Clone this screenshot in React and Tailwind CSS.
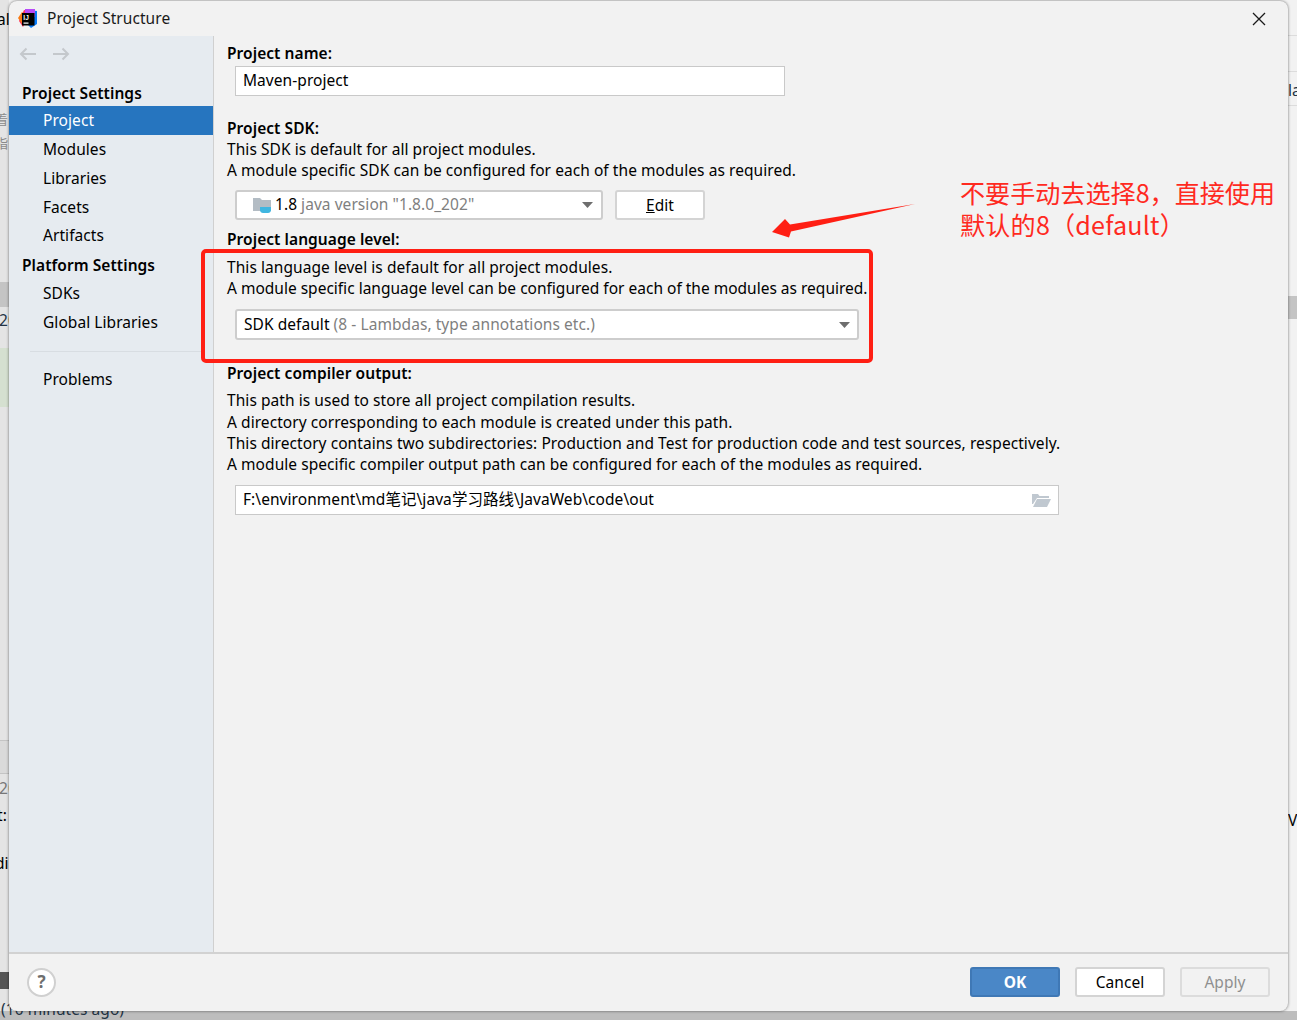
import React from "react";

function Arrowhead() {
  return (
    <svg width="11" height="6" viewBox="0 0 11 6"><path d="M0 0h11L5.500 6z" fill="#6e6e6e" /></svg>
  );
}

function Logo() {
  return (
    <svg width="20" height="20" viewBox="0 0 20 20">
      <path d="M1 12L6 1l7 1-8 16z" fill="#fe315d" />
      <path d="M0 9l4-6 5 5-4 8z" fill="#f97a12" />
      <path d="M9 1l10 1 0 13-6 4-4-4z" fill="#087cfa" />
      <path d="M7 0h10v8H7z" fill="#b74af7" />
      <rect x="4" y="4" width="12.5" height="12.5" fill="#000" />
      <rect x="5.5" y="13.5" width="5" height="1.2" fill="#fff" />
      <text x="5.3" y="11" fontSize="6.5" fontWeight="700" fill="#fff" fontFamily="Liberation Sans, sans-serif">IJ</text>
    </svg>
  );
}

function NavItem({ children, active, className = "" }) {
  return (
    <div className={`h-[29px] pl-[34px] flex items-center ${active ? "bg-[#2675bf] text-white" : "text-black"} ${className}`}>{children}</div>
  );
}

function NavHead({ children, className = "" }) {
  return <div className={`pl-[13px] flex items-center font-semibold text-black ${className}`}>{children}</div>;
}

function Line({ children, bold, className = "" }) {
  return <div className={`h-[21px] leading-[21px] whitespace-nowrap ${bold ? "font-semibold" : ""} ${className}`}>{children}</div>;
}

function Btn({ children, className = "" }) {
  return <div className={`h-[30px] rounded-[3px] border-2 pt-px flex items-center justify-center ${className}`}>{children}</div>;
}

export default function App() {
  return (
    <div className="relative w-[1297px] h-[1020px] overflow-hidden bg-[#f2f2f2] text-[15.5px] tracking-[0.06px] text-black" style={{ fontFamily: '"Noto Sans", "Noto Sans CJK SC", sans-serif' }}>
      {/* window behind the dialog */}
      <div className="absolute left-0 top-0 w-[9px] h-full bg-[#e4e4e4]" />
      <div className="absolute left-0 top-[282px] w-[9px] h-[25px] bg-[#c4c4c4]" />
      <div className="absolute left-0 top-[348px] w-[9px] h-[59px] bg-[#d5e0d0]" />
      <div className="absolute left-0 top-[740px] w-[9px] h-[34px] bg-[#dadada] border-y border-[#c4c4c4]" />
      <div className="absolute left-[-3px] top-[8px]">al</div>
      <div className="absolute left-[-5px] top-[110px] text-[#8a8a8a] text-[13px]">着</div>
      <div className="absolute left-[-5px] top-[134px] text-[#8a8a8a] text-[13px]">指</div>
      <div className="absolute left-[-1px] top-[309px] text-[#234]">20</div>
      <div className="absolute left-[-1px] top-[777px] text-[#777]">20</div>
      <div className="absolute left-[-3px] top-[804px]">t:</div>
      <div className="absolute left-[-5px] top-[852px]">di</div>
      <div className="absolute left-0 top-[972px] w-[9px] h-[17px] bg-[#555]" />
      <div className="absolute left-[1288px] top-[35px] w-[9px] h-px bg-[#dcdcdc]" />
      <div className="absolute left-[1288px] top-[71px] w-[9px] h-px bg-[#dcdcdc]" />
      <div className="absolute left-[1288px] top-[105px] w-[9px] h-px bg-[#dcdcdc]" />
      <div className="absolute left-[1288px] top-[296px] w-[9px] h-[23px] bg-[#c4c4c4]" />
      <div className="absolute left-[1288px] top-[79px] text-[#234]">la</div>
      <div className="absolute left-[1288px] top-[809px]">V</div>
      <div className="absolute left-0 top-[1011px] w-full h-[9px] bg-[#bdbdbd]" />
      <div className="absolute left-[1px] top-[998px] text-[#234] whitespace-nowrap">(10 minutes ago)</div>

      {/* dialog */}
      <div className="relative ml-[9px] mt-px w-[1279px] h-[1010px] bg-[#f2f2f2] rounded-[8px] flex flex-col overflow-hidden shadow-[0_0_3px_rgba(0,0,0,0.55)]">
        <div className="h-[35px] shrink-0 flex items-center pl-[9px] pr-[22px]">
          <Logo />
          <span className="ml-[9px] mt-px text-[#1a1a1a]">Project Structure</span>
          <svg className="ml-auto" width="14" height="14" viewBox="0 0 14 14"><path d="M1 1l12 12M13 1L1 13" stroke="#1a1a1a" strokeWidth="1.3" /></svg>
        </div>

        <div className="flex-1 flex min-h-0">
          <aside className="w-[205px] shrink-0 bg-[#e6ebf0] border-r border-[#d0d0d0] flex flex-col">
            <div className="h-[36px] flex items-center pl-[10px] gap-[15px]">
              <svg width="18" height="14" viewBox="0 0 18 14"><path d="M17 7H2M7.500 1.500L2 7l5.500 5.500" fill="none" stroke="#c4c8cc" strokeWidth="2" /></svg>
              <svg width="18" height="14" viewBox="0 0 18 14"><path d="M1 7h15M10.500 1.500L16 7l-5.500 5.500" fill="none" stroke="#c4c8cc" strokeWidth="2" /></svg>
            </div>
            <div className="pt-[8px]">
              <NavHead className="h-[26px] pt-[2px]">Project Settings</NavHead>
              <NavItem active>Project</NavItem>
              <NavItem>Modules</NavItem>
              <NavItem>Libraries</NavItem>
              <NavItem>Facets</NavItem>
              <NavItem className="-mt-px">Artifacts</NavItem>
              <NavHead className="h-[27px] mt-[2px]">Platform Settings</NavHead>
              <NavItem>SDKs</NavItem>
              <NavItem>Global Libraries</NavItem>
              <div className="h-px bg-[#d8dde2] ml-[21px] mr-[12px] mt-[14px] mb-[13px]" />
              <NavItem>Problems</NavItem>
            </div>
          </aside>

          <main className="relative flex-1 pl-[13px] pt-[7px]">
            <Line bold>Project name:</Line>
            <div className="mt-[2px] ml-[8px] w-[550px] h-[30px] bg-white border border-[#c9c9c9] flex items-center pl-[7px] pb-[1px]">Maven-project</div>

            <Line bold className="mt-[22px]">Project SDK:</Line>
            <Line>This SDK is default for all project modules.</Line>
            <Line>A module specific SDK can be configured for each of the modules as required.</Line>
            <div className="mt-[9px] ml-[8px] flex gap-[12px]">
              <div className="w-[368px] h-[30px] bg-white border-2 border-[#cdcdcd] rounded-[3px] flex items-center pl-[16px] pr-[8px]">
                <svg width="20" height="19" viewBox="0 0 20 19" className="shrink-0 mt-[1px]">
                  <path d="M0 2h7l2 2h9v11H0z" fill="#b3bcc4" />
                  <path d="M7 11h11v3c0 2-1.500 3-3 3h-5c-1.500 0-3-1-3-3z" fill="#40b6e0" />
                </svg>
                <span className="ml-[2px]">1.8</span>
                <span className="ml-[4px] text-[#7f7f7f]">java version "1.8.0_202"</span>
                <span className="ml-auto flex"><Arrowhead /></span>
              </div>
              <Btn className="w-[90px] bg-white border-[#d4d4d4]"><span><span className="underline">E</span>dit</span></Btn>
            </div>

            <Line bold className="mt-[9px]">Project language level:</Line>
            <Line className="mt-[7px]">This language level is default for all project modules.</Line>
            <Line className="tracking-normal">A module specific language level can be configured for each of the modules as required.</Line>
            <div className="mt-[10px] ml-[8px] w-[624px] h-[31px] bg-white border-2 border-[#cdcdcd] rounded-[3px] flex items-center px-[7px]">
              <span>SDK default</span>
              <span className="ml-[4px] text-[#7f7f7f]">(8 - Lambdas, type annotations etc.)</span>
              <span className="ml-auto flex"><Arrowhead /></span>
            </div>

            <Line bold className="mt-[23px]">Project compiler output:</Line>
            <Line className="mt-[6px]">This path is used to store all project compilation results.</Line>
            <Line className="mt-px">A directory corresponding to each module is created under this path.</Line>
            <Line>This directory contains two subdirectories: Production and Test for production code and test sources, respectively.</Line>
            <Line>A module specific compiler output path can be configured for each of the modules as required.</Line>
            <div className="mt-[10px] ml-[8px] w-[824px] h-[30px] bg-white border border-[#c9c9c9] flex items-center px-[7px]">
              <span>F:\environment\md笔记\java学习路线\JavaWeb\code\out</span>
              <svg className="ml-auto" width="19" height="15" viewBox="0 0 19 15">
                <path d="M0 1h6l1.500 2H17v2H5L1 11H0z" fill="#c0c8d0" />
                <path d="M5 6h14l-4 8H1z" fill="#c0c8d0" />
              </svg>
            </div>
          </main>
        </div>

        <footer className="h-[59px] shrink-0 border-t-2 border-[#d2d2d2] flex items-center pl-[18px] pr-[18px] pb-[1px]">
          <div className="w-[29px] h-[29px] rounded-full bg-white border-2 border-[#d0d0d0] flex items-center justify-center text-[#6e6e6e] font-bold text-[17px]">?</div>
          <div className="ml-auto flex gap-[15px]">
            <Btn className="w-[90px] bg-[#4a87c7] border-[#3f78b5] text-white font-bold">OK</Btn>
            <Btn className="w-[90px] bg-white border-[#d4d4d4] text-black">Cancel</Btn>
            <Btn className="w-[90px] bg-[#f2f2f2] border-[#dcdcdc] text-[#8f8f8f]">Apply</Btn>
          </div>
        </footer>
      </div>

      {/* annotations */}
      <div className="absolute left-[201px] top-[249px] w-[672px] h-[114px] border-[4px] border-[#ff1f14] rounded-[5px]" />
      <svg className="absolute left-[770px] top-[200px]" width="150" height="40" viewBox="0 0 150 40">
        <path d="M145 4L20 24.500 15 19 2 32 19 37.500 21 31.500z" fill="#ff1f14" />
      </svg>
      <div className="absolute left-[960px] top-[177px] text-[25.1px] leading-[31px] text-[#ff2a1f] whitespace-nowrap tracking-normal" style={{ fontFamily: '"Noto Sans CJK SC", sans-serif' }}>
        <div>不要手动去选择8，直接使用</div>
        <div className="mt-px tracking-[0.2px]">默认的8（default）</div>
      </div>
    </div>
  );
}
